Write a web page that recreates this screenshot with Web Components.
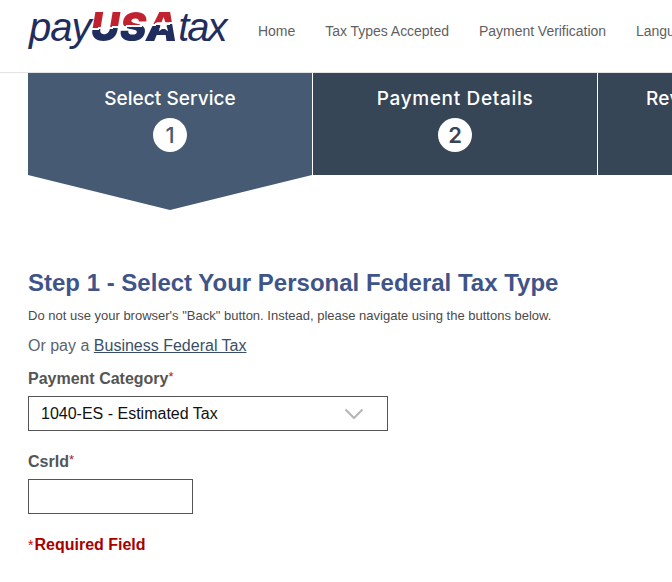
<!DOCTYPE html>
<html><head><meta charset="utf-8"><title>payUSAtax</title>
<style>
html,body{margin:0;padding:0;background:#fff;overflow:hidden;height:582px;width:672px}
body{font-family:"Liberation Sans",Arial,sans-serif}
</style></head><body>
<template id="t-header"><style>
:host{display:flex;box-sizing:border-box;height:73px;border-bottom:1px solid #e4e4e4;padding-left:28px;align-items:flex-start;overflow:hidden;width:672px}
.logo{display:flex;align-items:baseline;font-style:italic;font-size:40px;line-height:46px;height:46px;margin-top:4px;letter-spacing:-1px;color:#1f2d5f;width:200px;flex:none;white-space:nowrap;font-family:"Liberation Sans",sans-serif;padding-left:1px;margin-right:-1px}
.tax{letter-spacing:-2px}
.usa{position:relative;font:italic 900 40px/46px Inter,sans-serif;letter-spacing:.5px;background:linear-gradient(176deg,#c1222f 0 46%,#fff 46% 50%,#1f2d5f 50%);-webkit-background-clip:text;background-clip:text;color:transparent}
.star{position:absolute;left:65px;top:13px;width:15px;height:15px}
nav{display:flex;gap:30px;margin-left:30px;margin-top:23px;font-size:14px;line-height:17px;color:#5f5f5f;white-space:nowrap;letter-spacing:-.03px}
</style>
<div class="logo"><span>pay</span><span class="usa">USA<svg class="star" viewBox="0 0 20 20"><path fill="#fff" d="M10 0l2.600 7H20l-6 4.500L16.200 19 10 14.500 3.800 19 6 11.500 0 7h7.400z"/></svg></span><span class="tax">tax</span></div>
<nav><slot></slot></nav></template>

<template id="t-steps"><style>
:host{display:flex;gap:1px;margin-left:28px;height:137px;width:900px}
</style><slot></slot></template>

<template id="t-step"><style>
:host{display:block;flex:none;width:284px;height:102px;background:#364657;color:#fff;text-align:center;box-sizing:border-box;padding-top:14px}
:host([active]){height:137px;background:#465a73;clip-path:polygon(0 0,100% 0,100% 102px,50% 137px,0 102px)}
.l{font:500 19px/24px Inter,"Open Sans",sans-serif;letter-spacing:var(--ls,.2px);white-space:nowrap}
.n{width:34px;height:34px;border-radius:50%;background:#fff;color:#364657;margin:7px auto 0;font:600 22px/34px Inter,sans-serif}
:host([active]) .n{color:#465a73;font-weight:500}
</style><div class="l"><slot></slot></div><div class="n" id="n"></div></template>

<template id="t-form"><style>
:host{display:block;padding:58px 0 0 28px}
h1{margin:0;font-size:24px;line-height:30px;font-weight:700;color:#3f5488;white-space:nowrap}
.note{margin:10px 0 0;font-size:13px;line-height:16px;color:#4a4a4a}
.alt{margin:12px 0 0;font-size:16px;line-height:20px;color:#5b6470}
.alt a{color:#3a4f66;text-decoration:underline}
</style><h1>Step 1 - Select Your Personal Federal Tax Type</h1>
<p class="note">Do not use your browser's "Back" button. Instead, please navigate using the buttons below.</p>
<p class="alt">Or pay a <a href="#">Business Federal Tax</a></p>
<slot></slot></template>

<template id="t-field"><style>
:host{display:block;font-size:16px;color:#555}
.lab{display:block;font-weight:700;line-height:20px;margin-bottom:6px}
.lab span{color:#a02030;font-weight:400;font-size:13px;position:relative;top:-3px}
</style><label class="lab"><slot name="label"></slot><span>*</span></label><slot></slot></template>

<template id="t-select"><style>
:host{display:flex;box-sizing:border-box;width:360px;height:35px;border:1px solid #555;align-items:center;padding:0 23px 0 12px;justify-content:space-between;font-size:16px;color:#111}
svg{width:20px;height:12px}
</style><span><slot></slot></span><svg viewBox="0 0 20 12"><path d="M1.500 1.500l8.500 8.500 8.500-8.500" fill="none" stroke="#b5b5b5" stroke-width="2"/></svg></template>

<template id="t-input"><style>
:host{display:block;box-sizing:border-box;width:165px;height:35px;border:1px solid #555;background:#fff}
</style></template>

<template id="t-req"><style>
:host{display:block;font-size:16px;line-height:20px;font-weight:700;color:#a80000;margin-top:21px}
.s{font-weight:400;font-size:14px;color:#c00;margin-right:1px}
</style><span class="s">*</span><slot></slot></template>

<pay-header><span>Home</span><span>Tax Types Accepted</span><span>Payment Verification</span><span>Language</span></pay-header>
<pay-steps>
<pay-step active num="1" style="--ls:.05px">Select Service</pay-step>
<pay-step num="2" style="--ls:.67px">Payment Details</pay-step>
<pay-step num="3" style="--ls:.3px">Review and Confirm</pay-step>
</pay-steps>
<pay-form>
<pay-field style="margin-top:13px"><span slot="label">Payment Category</span><pay-select>1040-ES - Estimated Tax</pay-select></pay-field>
<pay-field style="margin-top:21px"><span slot="label">CsrId</span><pay-input></pay-input></pay-field>
<pay-req>Required Field</pay-req>
</pay-form>
<script>
function def(name,tid,init){customElements.define(name,class extends HTMLElement{constructor(){super();const r=this.attachShadow({mode:"open"});r.appendChild(document.getElementById(tid).content.cloneNode(true));}connectedCallback(){if(init)init(this)}})}
def("pay-header","t-header");
def("pay-steps","t-steps");
def("pay-step","t-step",e=>{e.shadowRoot.getElementById("n").textContent=e.getAttribute("num")});
def("pay-form","t-form");
def("pay-field","t-field");
def("pay-select","t-select");
def("pay-input","t-input");
def("pay-req","t-req");
</script>
</body></html>
